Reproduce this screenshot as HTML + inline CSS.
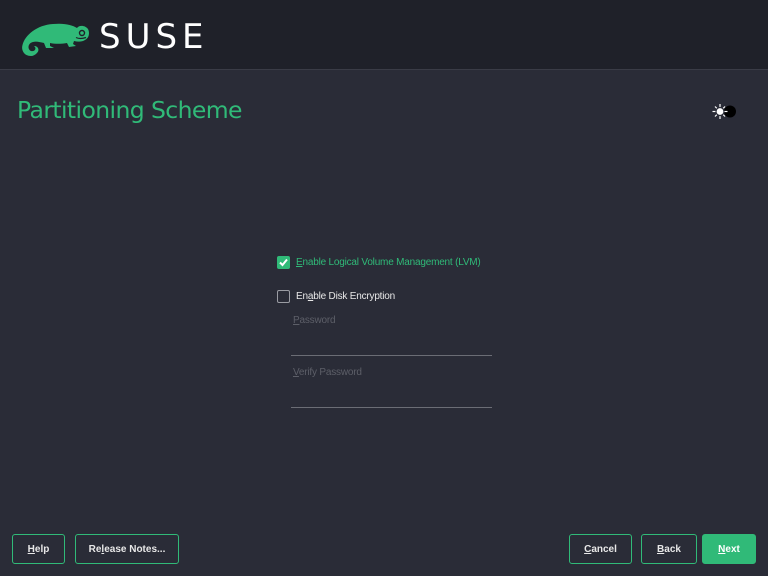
<!DOCTYPE html>
<html><head><style>
*{margin:0;padding:0;box-sizing:border-box}
body{width:768px;height:576px;background:#2a2c37;font-family:"Liberation Sans",sans-serif;position:relative;overflow:hidden}
.hdr{position:absolute;left:0;top:0;width:768px;height:70px;background:#1f2129;border-bottom:1px solid #3a3c46}
.suse{position:absolute;left:99px;top:17px;color:#fff;font-size:34px;letter-spacing:5px;font-family:"DejaVu Sans",sans-serif;font-weight:normal}
.title{position:absolute;left:17px;top:96px;color:#30ba78;font-size:23.5px;font-family:"DejaVu Sans",sans-serif;letter-spacing:-0.6px}
.btn{position:absolute;top:534px;height:30px;border:1px solid #30ba78;border-radius:3px;color:#e8e8e8;font-size:10px;font-weight:bold;display:flex;align-items:center;justify-content:center;background:#2a2c37}
.btn.p{background:#30ba78;color:#fff}
u{text-decoration:underline}
.cb{position:absolute;width:13px;height:13px;border-radius:2px}
.lbl{position:absolute;font-size:10px;letter-spacing:-0.2px}
.line{position:absolute;left:291px;width:201px;height:1px;background:#6b6d75}
</style></head><body>
<div class="hdr">
<svg style="position:absolute;left:21px;top:21px" width="70" height="36" viewBox="0 0 70 36">
<path fill="#30ba78" d="M10 35 C3 35 0 29 1.5 24 C4 14 16 4 32 3 C44 2 51 4 56 7 C58 4 64 4 67 8 C69 12 68 17 64 19 C61 21 57 21 53 20 L52 23 L55 25 L48 26 L46 22 C40 23 34 23 29 22 L29 25 L33 27 L25 27 L23 22 C19 21 15 20 12 21 C7 22 6 28 10 30 C14 31 16 27 13 25 C17 25 19 29 16 32 C14 34 12 35 10 35Z"/>
<circle cx="61" cy="12" r="3.2" fill="#1f2129"/><circle cx="61" cy="12" r="1.8" fill="#30ba78"/>
<path d="M55 16.5 Q59 18.5 65 16.5" stroke="#1f2129" stroke-width="1.2" fill="none"/>
</svg>
<div class="suse">SUSE</div>
</div>
<div class="title">Partitioning Scheme</div>
<svg style="position:absolute;left:711px;top:103px" width="26" height="17" viewBox="0 0 26 17">
<circle cx="19" cy="8.5" r="6" fill="#000"/>
<g stroke="#fff" stroke-width="1.2"><line x1="9" y1="1" x2="9" y2="16"/><line x1="1.5" y1="8.5" x2="16.5" y2="8.5"/><line x1="4" y1="3.5" x2="14" y2="13.5"/><line x1="14" y1="3.5" x2="4" y2="13.5"/></g>
<circle cx="9" cy="8.5" r="4" fill="#fff" stroke="#2a2c37" stroke-width="1.2"/>
</svg>
<div class="cb" style="left:277px;top:256px;background:#30ba78"><svg width="13" height="13"><path d="M3 6.5 L5.5 9 L10 3.5" stroke="#fff" stroke-width="2" fill="none"/></svg></div>
<div class="lbl" style="left:296px;top:257px;color:#30ba78"><u>E</u>nable Logical Volume Management (LVM)</div>
<div class="cb" style="left:277px;top:290px;border:1px solid #9a9ca3"></div>
<div class="lbl" style="left:296px;top:291px;color:#e8e8e8">En<u>a</u>ble Disk Encryption</div>
<div class="lbl" style="left:293px;top:315px;color:#5d5f68"><u>P</u>assword</div>
<div class="line" style="top:355px"></div>
<div class="lbl" style="left:293px;top:367px;color:#5d5f68"><u>V</u>erify Password</div>
<div class="line" style="top:407px"></div>
<div class="btn" style="left:12px;width:53px"><u>H</u>elp</div>
<div class="btn" style="left:75px;width:104px">Re<u>l</u>ease Notes...</div>
<div class="btn" style="left:569px;width:63px"><u>C</u>ancel</div>
<div class="btn" style="left:641px;width:56px"><u>B</u>ack</div>
<div class="btn p" style="left:702px;width:54px"><u>N</u>ext</div>
</body></html>
